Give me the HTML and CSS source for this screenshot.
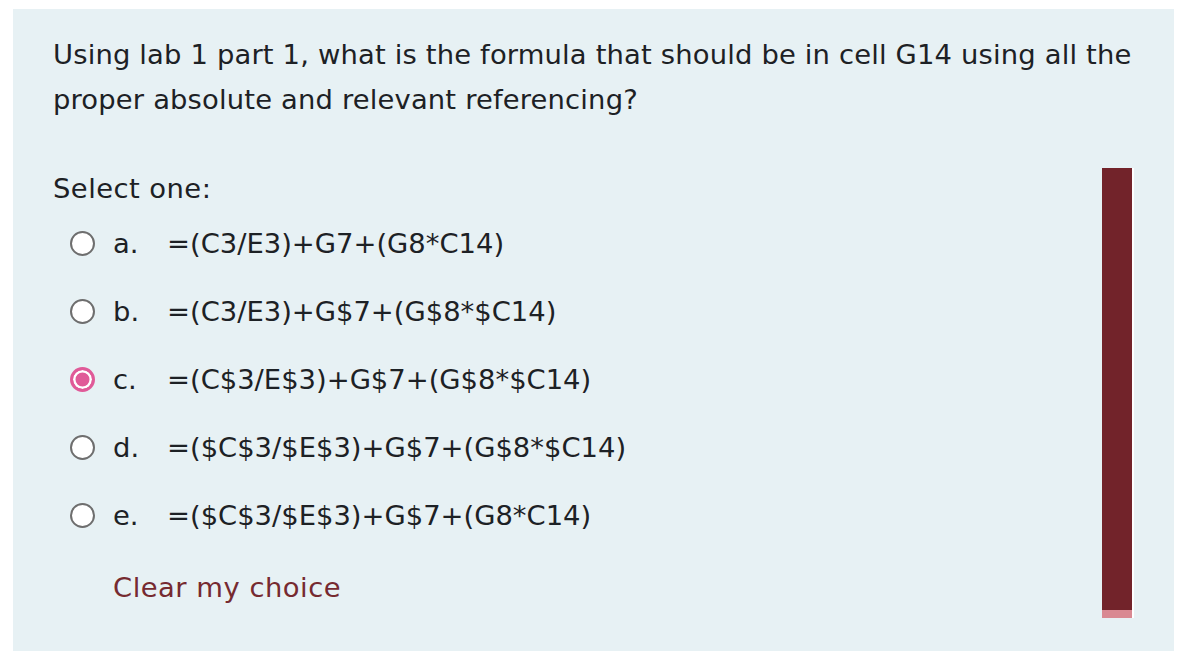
FILE: index.html
```html
<!DOCTYPE html>
<html>
<head>
<meta charset="utf-8">
<link rel="stylesheet" href="styles.css">
</head>
<body>
<div class="panel">
  <p class="question">Using lab 1 part 1, what is the formula that should be in cell G14 using all the proper absolute and relevant referencing?</p>
  <div class="lower">
    <div class="answers">
      <div class="prompt">Select one:</div>
      <div class="option"><span class="radio"></span><span class="letter">a.</span><span class="formula">=(C3/E3)+G7+(G8*C14)</span></div>
      <div class="option"><span class="radio"></span><span class="letter">b.</span><span class="formula">=(C3/E3)+G$7+(G$8*$C14)</span></div>
      <div class="option"><span class="radio checked"></span><span class="letter">c.</span><span class="formula">=(C$3/E$3)+G$7+(G$8*$C14)</span></div>
      <div class="option"><span class="radio"></span><span class="letter">d.</span><span class="formula">=($C$3/$E$3)+G$7+(G$8*$C14)</span></div>
      <div class="option"><span class="radio"></span><span class="letter">e.</span><span class="formula">=($C$3/$E$3)+G$7+(G8*C14)</span></div>
      <div class="clear">Clear my choice</div>
    </div>
    <div class="bar"><div class="bar-fill"></div><div class="bar-end"></div></div>
  </div>
</div>
</body>
</html>
```
FILE: styles.css
```css
html, body { margin: 0; padding: 0; background: #fff; }
body { font-family: "DejaVu Sans", "Liberation Sans", sans-serif; color: #1d2125; }
.panel {
  margin: 9px 28px 19px 13px;
  background: #e7f1f4;
  padding: 23px 40px 33px 40px;
  height: 586px;
}
.question {
  margin: 0;
  font-size: 27.4px;
  line-height: 45px;
  letter-spacing: 0.16px;
}
.lower {
  display: flex;
  justify-content: space-between;
  margin-top: 46px;
}
.answers { padding-top: 4px; }
.prompt { font-size: 27.4px; line-height: 34px; margin-bottom: 3px; letter-spacing: 0.45px; }
.option {
  display: flex;
  align-items: center;
  height: 68px;
  font-size: 27.4px;
}
.radio {
  width: 21px; height: 21px;
  border: 2px solid #6e6e6e;
  border-radius: 50%;
  background: #fff;
  margin-left: 17px;
  margin-right: 18px;
  flex: none;
}
.radio.checked {
  width: 19px; height: 19px;
  border: 3px solid #e05a98;
  background: #e05a98;
  box-shadow: inset 0 0 0 2.5px #fff;
}
.letter { width: 54px; }
.clear { color: #762a30; font-size: 27.4px; line-height: 34px; margin-left: 60px; margin-top: 22px; letter-spacing: 0.5px; }
.bar {
  width: 30px;
  height: 450px;
  border-right: 2px solid #fff;
  display: flex;
  flex-direction: column;
}
.bar-fill { flex: 1; background: #72232a; }
.bar-end { height: 8px; background: #d98992; }
```
